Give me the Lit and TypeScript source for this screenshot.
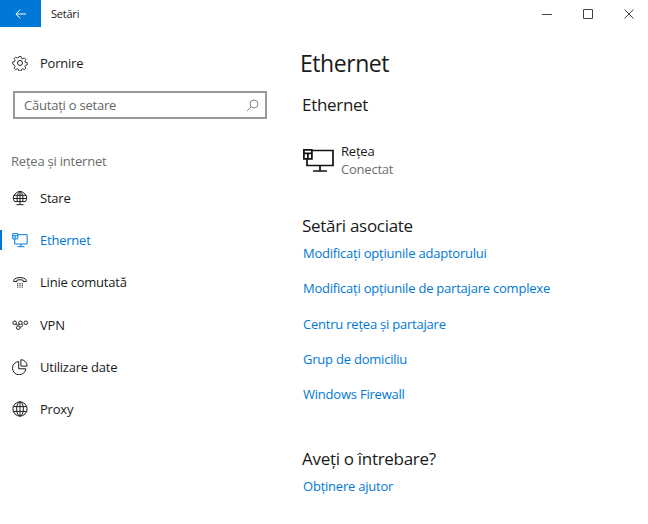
import {LitElement, html, css, svg} from 'lit';
import {customElement} from 'lit/decorators.js';

const icon = (body: unknown, box = 16) => html`<svg class="ico" width=${box} height=${box} viewBox="0 0 18 18" fill="none" stroke="currentColor" stroke-width="1.100">${body}</svg>`;

const icons = {
  gear: svg`<circle cx="9" cy="9" r="2.800"/><path d="M7.600 1h2.800l.5 2.300 1.500.6 2-1.300 2 2-1.300 2 .6 1.500 2.300.5v2.800l-2.300.5-.6 1.500 1.300 2-2 2-2-1.300-1.500.6-.5 2.300H7.600l-.5-2.300-1.500-.6-2 1.300-2-2 1.300-2-.6-1.500L0 10.400V7.600l2.300-.5.6-1.500-1.300-2 2-2 2 1.300 1.500-.6z" transform="translate(.9 .9) scale(.9)"/>`,
  globe: svg`<path d="M2.800 13a7.300 7.300 0 1 1 12.400 0z"/><path d="M9 1.500V13M2 6h14M1.800 9.500h14.400M6 13C5 8 6 4 9 1.500c3 2.500 4 6.500 3 11.500"/><path d="M9 13v3M5 16.500h8"/>`,
  ether: svg`<path d="M6.500 3H17v10.500H3V8"/><path d="M.8 1.800h5.700v6H.8zM.8 4.300h5.700M3.600 7.800V4.300"/><path d="M10 13.500v3M6 16.500h8"/>`,
  dial: svg`<path d="M2 7C3.500 3 14.500 3 16 7v1.500h-3.500V7c-2-.7-5-.7-7 0v1.500H2z"/><path d="M6 10.800h1M8.500 10.800h1M11 10.800h1M6 12.800h1M8.500 12.800h1M11 12.800h1M6 14.800h1M8.500 14.800h1M11 14.800h1" stroke-width="1.200"/>`,
  vpn: svg`<circle cx="3" cy="6.500" r="2"/><circle cx="9.500" cy="6.500" r="2"/><circle cx="15.500" cy="6.500" r="2"/><circle cx="7" cy="12" r="2"/><path d="M4.600 7.800C6 9.500 8 9.500 8.300 8M11 7.800C13.500 10 11 11 8.800 11.500"/>`,
  usage: svg`<path d="M7.500 2.800a7.500 7.500 0 1 0 8 8.200H7.500z"/><path d="M10 .8a7 7 0 0 1 7 7.200h-7z"/>`,
  proxy: svg`<circle cx="9" cy="9" r="8"/><ellipse cx="9" cy="9" rx="3.800" ry="8"/><path d="M9 1v16M1.500 6.300h15M1.500 11.700h15"/>`,
};

const navItems = [
  {label: 'Stare', icon: icons.globe},
  {label: 'Ethernet', icon: icons.ether, active: true},
  {label: 'Linie comutată', icon: icons.dial},
  {label: 'VPN', icon: icons.vpn},
  {label: 'Utilizare date', icon: icons.usage},
  {label: 'Proxy', icon: icons.proxy},
];

const links = [
  'Modificați opțiunile adaptorului',
  'Modificați opțiunile de partajare complexe',
  'Centru rețea și partajare',
  'Grup de domiciliu',
  'Windows Firewall',
];

@customElement('app-root')
export class AppRoot extends LitElement {
  static styles = css`
    :host {
      display: block;
      width: 648px;
      height: 524px;
      overflow: hidden;
      background: #fff;
      color: #1a1a1a;
      font-family: 'Open Sans', 'Noto Sans', sans-serif;
      font-size: 13px;
      letter-spacing: -0.22px;
    }
    .ico { display: block; flex: none; }

    .titlebar { display: flex; align-items: center; height: 27px; }
    .back {
      width: 41px;
      height: 27px;
      background: #0078d7;
      color: #fff;
      display: flex;
      align-items: center;
      justify-content: center;
    }
    .title { margin-left: 10px; font-size: 11px; flex: 1; }
    .win { display: flex; color: #444; margin-right: -1px; }
    .win span { width: 41px; height: 27px; display: flex; align-items: center; justify-content: center; }

    .body { display: grid; grid-template-columns: 302px 1fr; }

    .home { display: flex; align-items: center; gap: 12px; height: 20px; margin: 26px 0 0 12px; }
    .search {
      display: flex;
      align-items: center;
      justify-content: space-between;
      box-sizing: border-box;
      width: 254px;
      height: 28px;
      margin: 18px 0 0 13px;
      padding: 0 6px 0 9px;
      border: 2px solid #999;
      color: #666;
    }
    .group { margin: 33px 0 0 11px; height: 18px; color: #6d6d6d; }
    .nav { margin-top: 6.500px; }
    .item {
      display: flex;
      align-items: center;
      gap: 12px;
      height: 42.300px;
      padding-left: 12px;
      box-sizing: border-box;
      position: relative;
    }
    .item.active { color: #0078d7; }
    .item.active::before {
      content: '';
      position: absolute;
      left: 0;
      top: 11px;
      width: 2px;
      height: 20px;
      background: #0078d7;
    }

    .main { padding-top: 20px; }
    h1 { margin: 0 0 0 -2px; font-size: 23px; font-weight: 400; line-height: 32px; letter-spacing: -0.45px; }
    h2 { margin: 0; font-size: 17px; font-weight: 400; line-height: 24px; letter-spacing: -0.3px; }
    .eth-title { margin-top: 14px; }
    .net { display: flex; align-items: center; gap: 7px; margin-top: 25px; padding-left: 1px; }
    .net div { line-height: 18px; }
    .net small { display: block; font-size: 13px; color: #6d6d6d; }
    .assoc { margin-top: 36px; }
    .links { margin-top: 5px; }
    a {
      display: block;
      color: #0078d7;
      text-decoration: none;
      height: 35.300px;
      line-height: 20px;
      margin-left: 1px;
    }
    .ask { margin-top: 28px; }
    .ask + a { margin-top: 5px; }
  `;

  render() {
    return html`
      <div class="titlebar">
        <div class="back">
          <svg width="11" height="10" viewBox="0 0 11 10" fill="none" stroke="currentColor"><path d="M11 5H1M5.200.700 .900 5l4.300 4.300"/></svg>
        </div>
        <div class="title">Setări</div>
        <div class="win">
          <span><svg width="10" height="10" viewBox="0 0 10 10" stroke="currentColor"><path d="M0 5.500h10"/></svg></span>
          <span><svg width="10" height="10" viewBox="0 0 10 10" fill="none" stroke="currentColor"><path d="M.5.500h9v9h-9z"/></svg></span>
          <span><svg width="10" height="10" viewBox="0 0 10 10" stroke="currentColor"><path d="M.5.500l9 9M9.500.500l-9 9"/></svg></span>
        </div>
      </div>
      <div class="body">
        <aside>
          <div class="home">${icon(icons.gear)}<span>Pornire</span></div>
          <div class="search">
            <span>Căutați o setare</span>
            <svg width="13" height="13" viewBox="0 0 13 13" fill="none" stroke="#888"><circle cx="8" cy="5" r="4"/><path d="M5 8 .8 12.200"/></svg>
          </div>
          <div class="group">Rețea și internet</div>
          <div class="nav">
            ${navItems.map(n => html`<div class="item ${n.active ? 'active' : ''}">${icon(n.icon)}<span>${n.label}</span></div>`)}
          </div>
        </aside>
        <main class="main">
          <h1>Ethernet</h1>
          <h2 class="eth-title">Ethernet</h2>
          <div class="net">
            <svg width="31" height="23" viewBox="0 0 31 23" fill="none" stroke="#111" stroke-width="1.700"><path d="M9 1.500h21v15H4V10"/><path d="M.9.900h8v9h-8zM.9 4.300h8M4.900 9.900V4.300"/><path d="M17 16.500v5.500M10 22h14"/></svg>
            <div>Rețea<small>Conectat</small></div>
          </div>
          <h2 class="assoc">Setări asociate</h2>
          <div class="links">${links.map(l => html`<a>${l}</a>`)}</div>
          <h2 class="ask">Aveți o întrebare?</h2>
          <a>Obținere ajutor</a>
        </main>
      </div>
    `;
  }
}
